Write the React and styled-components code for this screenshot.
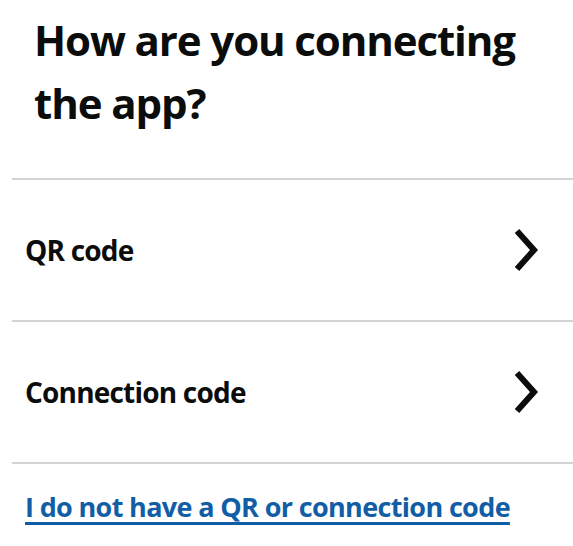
import styled, { createGlobalStyle } from "styled-components";

const GlobalStyle = createGlobalStyle`
  body {
    margin: 0;
    background: #ffffff;
    font-family: "Open Sans", "Liberation Sans", sans-serif;
    color: #0b0c0c;
  }
`;

const options = [
    { id: "qr", label: "QR code" },
    { id: "connection", label: "Connection code" },
];

function Chevron() {
    return (
        <svg width="28" height="44" viewBox="0 0 28 44" fill="none">
            <path d="M5 3 L22 22 L5 41" stroke="#0b0c0c" strokeWidth="6" strokeLinecap="butt" strokeLinejoin="miter" />
        </svg>
    );
}

export default function App() {
    return (
        <>
            <GlobalStyle />
            <Page>
                <Heading>How are you connecting the app?</Heading>
                <OptionList>
                    {options.map((option) => (
                        <OptionRow key={option.id}>
                            <OptionLabel>{option.label}</OptionLabel>
                            <Chevron />
                        </OptionRow>
                    ))}
                </OptionList>
                <HelpLink href="#">I do not have a QR or connection code</HelpLink>
            </Page>
        </>
    );
}

const Page = styled.div`
  display: flex;
  flex-direction: column;
  padding: 8px 0 0 12px;
`;

const Heading = styled.h1`
  margin: 0 0 0 22px;
  font-size: 42px;
  line-height: 63px;
  font-weight: 700;
  letter-spacing: -1.1px;
  padding-bottom: 44px;
`;

const OptionList = styled.div`
  display: flex;
  flex-direction: column;
  border-bottom: 2px solid #d4d4d4;
`;

const OptionRow = styled.div`
  display: flex;
  align-items: center;
  justify-content: space-between;
  height: 142px;
  box-sizing: border-box;
  border-top: 2px solid #d4d4d4;
  padding: 0 33px 0 13px;
  cursor: pointer;
`;

const OptionLabel = styled.span`
  font-size: 28px;
  font-weight: 700;
  letter-spacing: -0.8px;
`;

const HelpLink = styled.a`
  margin: 24px 0 0 13px;
  align-self: flex-start;
  font-size: 27px;
  font-weight: 700;
  letter-spacing: -0.65px;
  color: #125ea6;
  text-decoration: underline;
  text-decoration-thickness: 3px;
  text-underline-offset: 5px;
`;
